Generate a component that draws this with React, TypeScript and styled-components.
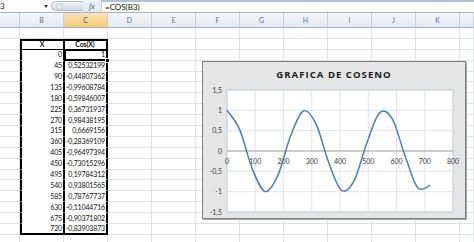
import styled, { createGlobalStyle } from "styled-components"

const GlobalStyle = createGlobalStyle`
  html, body {
    margin: 0;
    padding: 0;
    background: #fff;
  }
  body {
    font-family: Lato, "Liberation Sans", sans-serif;
    overflow: hidden;
  }
`

const COLUMNS = ["", "B", "C", "D", "E", "F", "G", "H", "I", "J", "K", ""]
const ROW_COUNT = 20

const data: [string, string][] = [
  ["0", "1"],
  ["45", "0,52532199"],
  ["90", "-0,44807362"],
  ["135", "-0,99608784"],
  ["180", "-0,59846007"],
  ["225", "0,36731937"],
  ["270", "0,98438195"],
  ["315", "0,6669156"],
  ["360", "-0,28369109"],
  ["405", "-0,96497394"],
  ["450", "-0,73015296"],
  ["495", "0,19784312"],
  ["540", "0,93801565"],
  ["585", "0,78767737"],
  ["630", "-0,11044716"],
  ["675", "-0,90371802"],
  ["720", "-0,83903873"],
]

const Page = styled.div`
  position: relative;
  width: 474px;
  height: 242px;
  overflow: hidden;
  background: #fff;
`

const FormulaBar = styled.div`
  display: flex;
  align-items: stretch;
  height: 12px;
  border-bottom: 1px solid #a3b5cc;
  font-size: 8px;
`
const NameBox = styled.div`
  width: 48px;
  display: flex;
  align-items: center;
  justify-content: space-between;
  padding-right: 3px;
  background: #fff;
  color: #222;
  line-height: 12px;
`
const DropArrow = styled.span`
  width: 0;
  height: 0;
  border-left: 2px solid transparent;
  border-right: 2px solid transparent;
  border-top: 3px solid #333;
`
const Grip = styled.div`
  width: 32px;
  margin-top: 1px;
  height: 10px;
  box-sizing: border-box;
  border: 1px solid #aebcd0;
  border-right: none;
  border-radius: 5px 0 0 5px;
  background: linear-gradient(#eef2f8, #d0d9e6);
  display: flex;
  align-items: center;
  padding-left: 4px;
`
const GripDot = styled.span`
  width: 5px;
  height: 5px;
  border-radius: 50%;
  border: 1px solid #bfcad9;
  background: #e6ebf2;
`
const FxLabel = styled.div`
  width: 18px;
  display: flex;
  align-items: center;
  justify-content: center;
  font: italic 8px "Liberation Serif", serif;
  color: #4e5766;
  background: linear-gradient(#eef2f7, #e2e8f1);
`
const FormulaInput = styled.div`
  flex: 1;
  border-top: 2px solid #b2c0d3;
  border-left: 1px solid #c3ccd9;
  background: #fffff7;
  padding-left: 3px;
  line-height: 10px;
  color: #111;
`

const HeaderRow = styled.div`
  display: grid;
  grid-template-columns: 20px repeat(10, 44px) 14px;
  height: 15px;
`
const ColumnHead = styled.div<{ $active?: boolean }>`
  box-sizing: border-box;
  border-right: 1px solid #c3cfdf;
  border-bottom: 1px solid #9db3cb;
  background: ${(p) =>
    p.$active
      ? "linear-gradient(#fbe3ae, #f5c874)"
      : "linear-gradient(#f4f7fb, #e2e9f2)"};
  color: ${(p) => (p.$active ? "#4a4a4a" : "#5b6d86")};
  font-size: 7px;
  display: flex;
  align-items: center;
  justify-content: center;
`

const Grid = styled.div`
  display: grid;
  grid-template-columns: 20px repeat(10, 44px) 14px;
  grid-auto-rows: 10.9px;
`

type CellProps = {
  $col: number
  $inTable: boolean
  $head: boolean
  $last: boolean
  $active: boolean
}

const Cell = styled.div<CellProps>`
  position: relative;
  box-sizing: border-box;
  font-size: 7px;
  letter-spacing: -0.15px;
  line-height: 9px;
  color: #111;
  padding: 0 1px 0 0;
  white-space: nowrap;
  display: flex;
  align-items: center;
  justify-content: ${(p) => (p.$head ? "center" : "flex-end")};
  font-weight: ${(p) => (p.$head ? 700 : 400)};
  background: #fff;
  border-right: 1px solid #dde1e6;
  border-bottom: 1px solid #dde1e6;

  ${(p) =>
    p.$inTable &&
    `
    border-bottom: 1px solid ${p.$head ? "#000" : "#fff"};
    ${p.$head ? "border-top: 2px solid #000;" : ""}
    ${p.$last ? "border-bottom: 2px solid #000;" : ""}
    ${p.$col === 1 ? "border-left: 2px solid #000; border-right: 1px solid #000;" : ""}
    ${p.$col === 2 ? "border-left: 1px solid #000; border-right: 2px solid #000;" : ""}
  `}

  ${(p) =>
    p.$active &&
    `
    &::after {
      content: "";
      position: absolute;
      inset: -1px -2px -1px -1px;
      border: 2px solid #000;
    }
    &::before {
      content: "";
      position: absolute;
      right: -4px;
      bottom: -3px;
      width: 3px;
      height: 3px;
      background: #000;
      border: 1px solid #fff;
      z-index: 1;
    }
  `}
`

const Chart = styled.div`
  position: absolute;
  left: 202px;
  top: 61px;
  width: 264px;
  height: 158px;
  box-sizing: border-box;
  background: #e5e5e5;
  border: 1px solid #808080;
  box-shadow: 1px 1px 0 #a8a8a8;
  display: flex;
  flex-direction: column;
`
const ChartTitle = styled.div`
  height: 28px;
  text-align: center;
  font: 700 9.6px/26px "Open Sans", sans-serif;
  letter-spacing: 1px;
  color: #1d1d1d;
`
const Plot = styled.svg`
  overflow: visible;
  display: block;
`

// plot geometry (inside chart svg)
const PX = 24
const PW = 226
const PH = 122
const xPos = (x: number) => PX + (x / 800) * PW
const yPos = (y: number) => ((1.5 - y) / 3) * PH

function curvePath() {
  const pts = data.map(([x]) => {
    const v = Number(x)
    return [xPos(v), yPos(Math.cos(v))]
  })
  let d = `M${pts[0][0].toFixed(2)},${pts[0][1].toFixed(2)}`
  for (let i = 0; i < pts.length - 1; i++) {
    const p0 = pts[i - 1] || pts[i]
    const p1 = pts[i]
    const p2 = pts[i + 1]
    const p3 = pts[i + 2] || p2
    const c1x = p1[0] + (p2[0] - p0[0]) / 6
    const c1y = p1[1] + (p2[1] - p0[1]) / 6
    const c2x = p2[0] - (p3[0] - p1[0]) / 6
    const c2y = p2[1] - (p3[1] - p1[1]) / 6
    d += ` C${c1x.toFixed(2)},${c1y.toFixed(2)} ${c2x.toFixed(2)},${c2y.toFixed(2)} ${p2[0].toFixed(2)},${p2[1].toFixed(2)}`
  }
  return d
}

const yTicks = [1.5, 1, 0.5, 0, -0.5, -1, -1.5]
const xTicks = [0, 100, 200, 300, 400, 500, 600, 700, 800]
const fmt = (n: number) => String(n).replace(".", ",")

function CosineChart() {
  return (
    <Chart>
      <ChartTitle>GRAFICA DE COSENO</ChartTitle>
      <Plot width={262} height={128}>
        <rect x={PX} y={0} width={PW} height={PH} fill="#fff" stroke="#b8c8dc" />
        {xTicks.slice(1, -1).map((t) => (
          <line key={t} x1={xPos(t)} x2={xPos(t)} y1={0} y2={PH} stroke="#dfe3e8" />
        ))}
        {yTicks.slice(1, -1).map((t) => (
          <line key={t} x1={PX} x2={PX + PW} y1={yPos(t)} y2={yPos(t)} stroke="#dfe3e8" />
        ))}
        <line x1={PX} x2={PX + PW} y1={yPos(0)} y2={yPos(0)} stroke="#a6a6a6" />
        <g fontFamily="Lato, sans-serif" fontSize={7} fill="#3c3c3c">
          {yTicks.map((t) => (
            <text key={t} x={PX - 5} y={yPos(t) + 2.5} textAnchor="end">
              {fmt(t)}
            </text>
          ))}
          {xTicks.map((t) => (
            <text key={t} x={xPos(t)} y={yPos(0) + 13} textAnchor="middle">
              {t}
            </text>
          ))}
        </g>
        <path d={curvePath()} fill="none" stroke="#4a7ebb" strokeWidth={1.5} />
      </Plot>
    </Chart>
  )
}

function App() {
  const rows = Array.from({ length: ROW_COUNT }, (_, i) => i + 1)
  return (
    <Page>
      <GlobalStyle />
      <FormulaBar>
        <NameBox>
          <span>3</span>
          <DropArrow />
        </NameBox>
        <Grip>
          <GripDot />
        </Grip>
        <FxLabel>fx</FxLabel>
        <FormulaInput>=COS(B3)</FormulaInput>
      </FormulaBar>
      <HeaderRow>
        {COLUMNS.map((c, i) => (
          <ColumnHead key={i} $active={c === "C"}>
            {c}
          </ColumnHead>
        ))}
      </HeaderRow>
      <Grid>
        {rows.map((r) =>
          COLUMNS.map((_, col) => {
            const inTable = r >= 2 && r <= 19 && (col === 1 || col === 2)
            const head = inTable && r === 2
            let text = ""
            if (head) text = col === 1 ? "X" : "Cos(X)"
            else if (inTable) text = data[r - 3][col - 1]
            return (
              <Cell
                key={`${r}-${col}`}
                $col={col}
                $inTable={inTable}
                $head={head}
                $last={inTable && r === 19}
                $active={r === 3 && col === 2}
              >
                {text}
              </Cell>
            )
          })
        )}
      </Grid>
      <CosineChart />
    </Page>
  )
}

export default App
